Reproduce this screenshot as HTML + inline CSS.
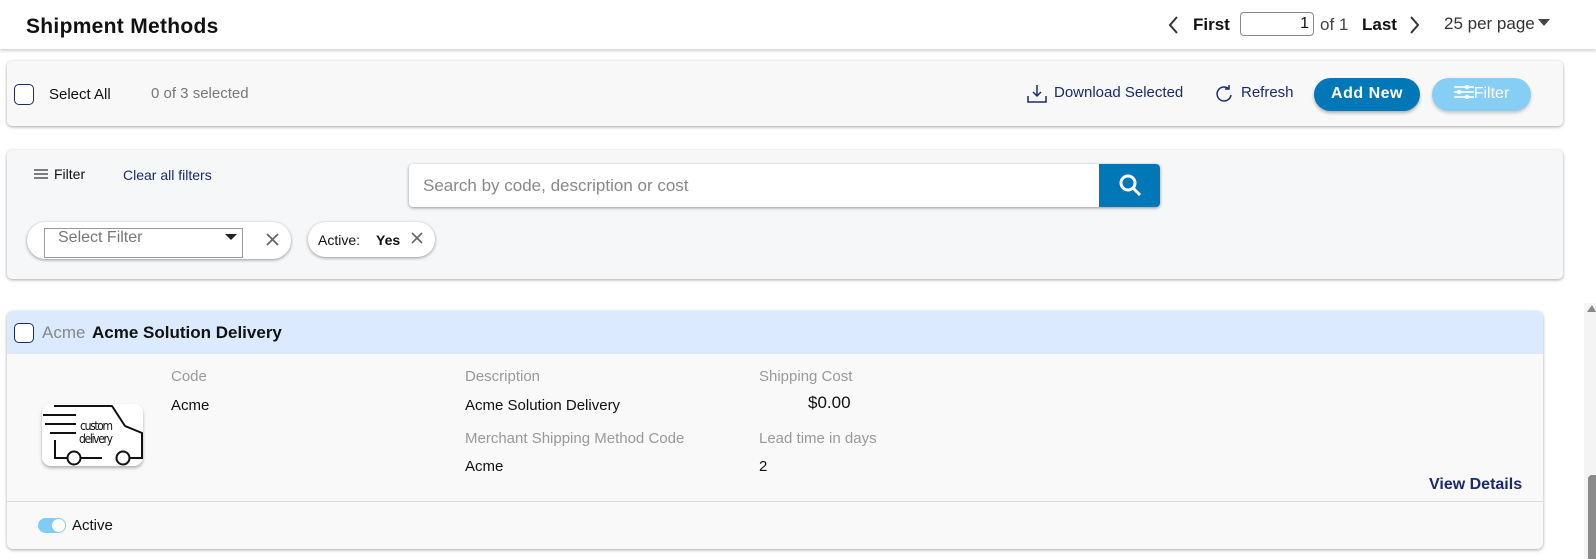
<!DOCTYPE html>
<html><head><style>
*{box-sizing:border-box;margin:0;padding:0}
body{width:1596px;height:559px;overflow:hidden;background:#fff;font-family:"Liberation Sans",Arial,sans-serif;position:relative;color:#111}
.a{position:absolute}
.hdr{left:0;top:0;width:1596px;height:49px;background:#fff;box-shadow:0 2px 3px rgba(0,0,0,.18)}
.cb{border:1.5px solid #1a2a6c;border-radius:5px;background:#fff}
.blue{color:#1a2a6c}
</style></head><body>
<div class="a hdr"></div>
<div class="a" style="left:26px;top:15px;font-size:21px;font-weight:bold;color:#111;letter-spacing:.3px">Shipment Methods</div>
<svg class="a" style="left:1168px;top:15px" width="12" height="20"><path d="M9 2L2 10L9 18" stroke="#333" stroke-width="2" fill="none"/></svg>
<div class="a" style="left:1193px;top:15px;font-size:17px;font-weight:bold">First</div>
<div class="a" style="left:1240px;top:12px;width:74px;height:24px;border:1px solid #888;border-radius:4px;text-align:right;padding:2px 4px;font-size:16px">1</div>
<div class="a" style="left:1320px;top:15px;font-size:17px;color:#444">of 1</div>
<div class="a" style="left:1362px;top:15px;font-size:17px;font-weight:bold">Last</div>
<svg class="a" style="left:1408px;top:15px" width="12" height="20"><path d="M3 2L10 10L3 18" stroke="#333" stroke-width="2" fill="none"/></svg>
<div class="a" style="left:1444px;top:14px;font-size:17px;color:#333">25 per page</div>
<svg class="a" style="left:1538px;top:19px" width="12" height="8"><path d="M0 0H12L6 7Z" fill="#444"/></svg>

<div class="a" style="left:7px;top:61px;width:1556px;height:65px;background:#f8f8f8;border-radius:5px;box-shadow:0 1px 3px rgba(0,0,0,.35)"></div>
<div class="a cb" style="left:14px;top:84px;width:20px;height:21px"></div>
<div class="a" style="left:49px;top:86px;font-size:15px">Select All</div>
<div class="a" style="left:151px;top:85px;font-size:15px;color:#777">0 of 3 selected</div>
<svg class="a" style="left:1027px;top:84px" width="20" height="20" fill="none" stroke="#1a2a6c" stroke-width="1.5"><path d="M10 1V12M6 8L10 12L14 8M1 12V18H19V12"/></svg>
<div class="a blue" style="left:1054px;top:84px;font-size:15px">Download Selected</div>
<svg class="a" style="left:1214px;top:84px" width="20" height="20" fill="none" stroke="#1a2a6c" stroke-width="1.5"><path d="M15 5A7 7 0 1 0 17 11"/><path d="M15 1V5H11"/></svg>
<div class="a blue" style="left:1241px;top:84px;font-size:15px">Refresh</div>
<div class="a" style="left:1314px;top:78px;width:106px;height:33px;background:#0077b6;border-radius:17px;color:#fff;font-size:16px;font-weight:bold;text-align:center;line-height:32px;box-shadow:0 2px 3px rgba(0,0,0,.3);letter-spacing:.5px">Add New</div>
<div class="a" style="left:1432px;top:78px;width:99px;height:33px;background:#87cef5;border-radius:17px;color:#fff;font-size:16px;text-align:center;line-height:32px;box-shadow:0 2px 3px rgba(0,0,0,.2)"><svg width="20" height="14" style="vertical-align:-1px" stroke="#fff" fill="none" stroke-width="1.5"><path d="M0 2H20M0 7H20M0 12H20"/><circle cx="13" cy="2" r="1.5"/><circle cx="5" cy="7" r="1.5"/><circle cx="13" cy="12" r="1.5"/></svg>Filter</div>

<div class="a" style="left:7px;top:150px;width:1556px;height:129px;background:#f5f7f9;border-radius:5px;box-shadow:0 1px 3px rgba(0,0,0,.35)"></div>
<svg class="a" style="left:34px;top:167px" width="14" height="14" stroke="#555" stroke-width="1.5"><path d="M0 3H14M0 7H14M0 11H14"/></svg>
<div class="a" style="left:54px;top:166px;font-size:14px">Filter</div>
<div class="a blue" style="left:123px;top:167px;font-size:14px">Clear all filters</div>
<div class="a" style="left:409px;top:164px;width:751px;height:43px;background:#fff;border-radius:4px;box-shadow:0 1px 3px rgba(0,0,0,.4)"></div>
<div class="a" style="left:423px;top:176px;font-size:17px;color:#888">Search by code, description or cost</div>
<div class="a" style="left:1099px;top:164px;width:61px;height:43px;background:#0077b6;border-radius:0 4px 4px 0"></div>
<svg class="a" style="left:1118px;top:173px" width="24" height="24" fill="none" stroke="#fff" stroke-width="3"><circle cx="10" cy="10" r="7"/><path d="M15 15L22 22"/></svg>
<div class="a" style="left:27px;top:222px;width:264px;height:37px;background:#fff;border-radius:19px;box-shadow:0 1px 3px rgba(0,0,0,.4)"></div>
<div class="a" style="left:44px;top:228px;width:199px;height:30px;border:1px solid #999"></div>
<div class="a" style="left:58px;top:229px;font-size:16px;color:#777">Select Filter</div>
<svg class="a" style="left:225px;top:234px" width="12" height="7"><path d="M0 0H12L6 6Z" fill="#222"/></svg>
<svg class="a" style="left:266px;top:233px" width="13" height="13" stroke="#666" stroke-width="1.8"><path d="M1 1L12 12M12 1L1 12"/></svg>
<div class="a" style="left:308px;top:222px;width:127px;height:35px;background:#fff;border-radius:18px;box-shadow:0 1px 3px rgba(0,0,0,.4)"></div>
<div class="a" style="left:318px;top:232px;font-size:14px">Active:</div>
<div class="a" style="left:376px;top:232px;font-size:14px;font-weight:bold">Yes</div>
<svg class="a" style="left:411px;top:232px" width="12" height="12" stroke="#666" stroke-width="1.6"><path d="M1 1L11 11M11 1L1 11"/></svg>

<div class="a" style="left:7px;top:311px;width:1536px;height:238px;background:#f9f9f9;border-radius:6px;box-shadow:0 1px 3px rgba(0,0,0,.35);overflow:hidden">
<div style="height:43px;background:#dbeafe"></div>
<div style="position:absolute;left:0;top:190px;width:100%;height:1px;background:#ddd"></div>
</div>
<div class="a cb" style="left:14px;top:323px;width:20px;height:20px"></div>
<div class="a" style="left:42px;top:323px;font-size:17px;color:#888">Acme</div>
<div class="a" style="left:92px;top:323px;font-size:17px;font-weight:bold">Acme Solution Delivery</div>
<div class="a" style="left:42px;top:404px;width:101px;height:62px;background:#fff;border-radius:9px;box-shadow:0 2px 3px rgba(0,0,0,.3)"></div>
<svg class="a" style="left:42px;top:404px" width="101" height="62" fill="none" stroke="#111" stroke-width="2"><path d="M12 2H70L83 22L100 29V54H88M60 54H39M25 54H13V36"/><path d="M1 11H34M3 20H34M8 29H34"/><circle cx="32" cy="54" r="6.5" fill="#fff"/><circle cx="81" cy="54" r="6.5" fill="#fff"/><text x="38" y="26" font-size="12" stroke="none" fill="#111" font-family="DejaVu Sans Condensed,Liberation Sans" textLength="33">custom</text><text x="37" y="39" font-size="12" stroke="none" fill="#111" font-family="DejaVu Sans Condensed,Liberation Sans" textLength="34">delivery</text></svg>
<div class="a" style="left:171px;top:368px;font-size:15px;color:#999">Code</div>
<div class="a" style="left:171px;top:397px;font-size:15px">Acme</div>
<div class="a" style="left:465px;top:368px;font-size:15px;color:#999">Description</div>
<div class="a" style="left:465px;top:397px;font-size:15px">Acme Solution Delivery</div>
<div class="a" style="left:465px;top:430px;font-size:15px;color:#999">Merchant Shipping Method Code</div>
<div class="a" style="left:465px;top:458px;font-size:15px">Acme</div>
<div class="a" style="left:759px;top:368px;font-size:15px;color:#999">Shipping Cost</div>
<div class="a" style="left:808px;top:393px;font-size:17px">$0.00</div>
<div class="a" style="left:759px;top:430px;font-size:15px;color:#999">Lead time in days</div>
<div class="a" style="left:759px;top:458px;font-size:15px">2</div>
<div class="a blue" style="left:1429px;top:476px;font-size:16px;font-weight:bold">View Details</div>
<div class="a" style="left:38px;top:518px;width:28px;height:15px;background:#7fcdf5;border-radius:8px"></div>
<div class="a" style="left:52px;top:519px;width:13px;height:13px;background:#fff;border-radius:50%"></div>
<div class="a" style="left:72px;top:517px;font-size:15px">Active</div>

<div class="a" style="left:1584px;top:303px;width:12px;height:256px;background:#f4f4f4"></div>
<svg class="a" style="left:1587px;top:305px" width="9" height="7"><path d="M0 7L5 0L9 7Z" fill="#888"/></svg>
<div class="a" style="left:1588px;top:475px;width:8px;height:84px;background:#8a8a8a;border-radius:4px 0 0 0"></div>
</body></html>
